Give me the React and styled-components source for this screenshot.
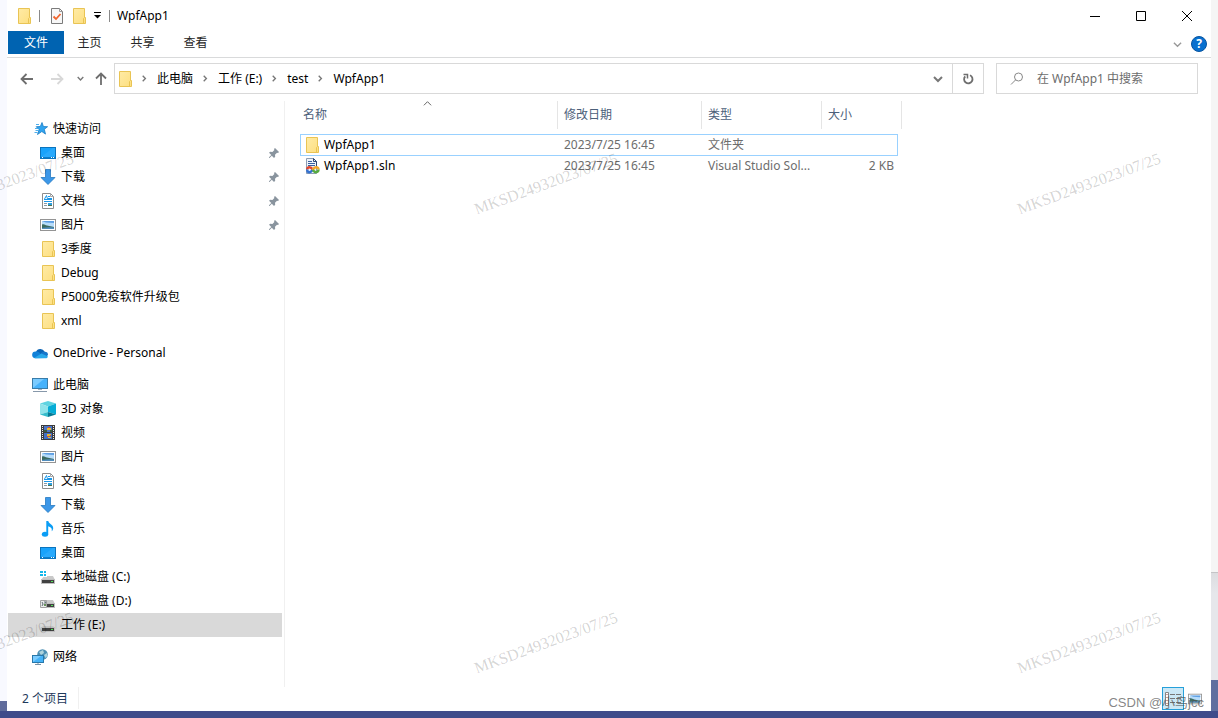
import { useState } from "react";
import styled, { createGlobalStyle } from "styled-components";

const GlobalStyle = createGlobalStyle`
  * { box-sizing: border-box; }
  body {
    margin: 0;
    background: #3f4b8a;
    font-family: "Noto Sans", "Noto Sans CJK SC", sans-serif;
    font-size: 12px;
    line-height: 16px;
    color: #000;
  }
  button, input {
    font: inherit;
    color: inherit;
    border: 0;
    padding: 0;
    background: transparent;
  }
  svg { display: block; flex: none; }
`;

const Desktop = styled.div`
  position: relative;
  display: grid;
  grid-template-columns: 7px 1fr 7px;
  grid-template-rows: 1fr 7px;
  min-height: 100vh;
  overflow: hidden;
`;

const LeftEdge = styled.div`
  background: #f8f9ff;
  border-bottom: 10px solid #5f6b9b;
`;

const RightEdge = styled.div`
  display: flex;
  flex-direction: column;
`;

const EdgeTop = styled.div`
  flex: 573;
  background: #f5f5f5;
  border-bottom: 1px solid #c4c4c6;
`;

const EdgeMiddle = styled.div`
  flex: 107;
  background: linear-gradient(#dcdde0, #e6e7eb 20px);
`;

const EdgeBottom = styled.div`
  flex: 31;
  background: #5f6f9f;
`;

const Window = styled.div`
  display: flex;
  flex-direction: column;
  background: #fff;
  min-width: 0;
`;

const TitleBar = styled.header`
  display: flex;
  align-items: center;
  height: 31px;
  padding-left: 9px;
`;

const Divider = styled.span`
  width: 1px;
  height: 12px;
  margin: 0 ${(p) => p.$right || 0}px 0 ${(p) => p.$left || 0}px;
  background: #8a8a8a;
`;

const QuickButton = styled.button`
  display: flex;
  align-items: center;
  justify-content: center;
  width: ${(p) => p.$width || 22}px;
  height: 22px;
`;

const Title = styled.h1`
  flex: 1;
  margin: 0;
  font-size: 12px;
  font-weight: normal;
`;

const WindowButtons = styled.div`
  display: flex;
  padding-right: 1px;
`;

const WindowButton = styled.button`
  display: flex;
  align-items: center;
  justify-content: center;
  width: 46px;
  height: 31px;
`;

const Ribbon = styled.nav`
  display: flex;
  height: 27px;
  padding-left: 1px;
  border-bottom: 1px solid #d9dadb;
`;

const Tab = styled.button`
  width: 53px;
  height: 24px;
  padding-right: 2px;
  color: #262626;
`;

const FileTab = styled(Tab)`
  width: 56px;
  height: 23px;
  padding-right: 0;
  color: #fff;
  background: #0063b1;
`;

const RibbonTools = styled.div`
  display: flex;
  align-items: center;
  gap: 9px;
  height: 26px;
  margin-left: auto;
  padding-right: 4px;
`;

const ToolBar = styled.div`
  display: flex;
  align-items: center;
  height: 41px;
  padding: 0 13px 0 5px;
`;

const NavButton = styled.button`
  display: flex;
  align-items: center;
  justify-content: center;
  width: ${(p) => p.$width || 30}px;
  height: 30px;
`;

const AddressBox = styled.div`
  display: flex;
  flex: 1;
  align-items: center;
  height: 31px;
  min-width: 0;
  padding-left: 3px;
  border: 1px solid #d9d9d9;
`;

const Crumbs = styled.ol`
  display: flex;
  flex: 1;
  margin: 0;
  padding: 0;
  list-style: none;
`;

const Crumb = styled.li`
  display: flex;
  align-items: center;
  white-space: nowrap;
`;

const CrumbArrow = styled.span`
  display: flex;
  justify-content: center;
  width: 25px;
`;

const Refresh = styled(NavButton)`
  width: 31px;
  height: 31px;
  border: 1px solid #d9d9d9;
  border-left: 0;
`;

const SearchBox = styled.label`
  display: flex;
  align-items: center;
  gap: 13px;
  width: 202px;
  height: 31px;
  margin-left: 12px;
  padding-left: 13px;
  border: 1px solid #d9d9d9;
`;

const SearchInput = styled.input`
  flex: 1;
  min-width: 0;
  outline: 0;
  &::placeholder {
    color: #6d6d6d;
    opacity: 1;
  }
`;

const Body = styled.div`
  display: flex;
  flex: 1;
  padding-top: 2px;
`;

const Sidebar = styled.nav`
  width: 278px;
  padding: 16px 2px 0 1px;
  border-right: 1px solid #f0f0f0;
`;

const Group = styled.ul`
  margin: 0 0 8px;
  padding: 0;
  list-style: none;
`;

const TreeItem = styled.button`
  display: flex;
  align-items: center;
  gap: 5px;
  width: 100%;
  height: 24px;
  padding: 0 2px 0 ${(p) => (p.$root ? 24 : 32)}px;
  text-align: left;
  background: ${(p) => (p.$active ? "#d9d9d9" : "transparent")};
`;

const TreeLabel = styled.span`
  flex: 1;
  white-space: nowrap;
`;

const Main = styled.main`
  flex: 1;
  min-width: 0;
  padding-left: 15px;
`;

const Files = styled.table`
  display: block;
  width: 602px;
  & thead, & tbody { display: block; }
`;

const HeadRow = styled.tr`
  display: grid;
  grid-template-columns: 258px 144px 120px 80px;
  height: 28px;
  margin-bottom: 5px;
`;

const HeadCell = styled.th`
  position: relative;
  padding: ${(p) => (p.$first ? "6px 0 0 3px" : "6px 0 0 6px")};
  border-right: 1px solid #e5e5e5;
  color: #4c607a;
  font-weight: normal;
  text-align: left;
`;

const SortMark = styled.span`
  position: absolute;
  top: -2px;
  left: 123px;
`;

const FileRow = styled.tr`
  display: grid;
  grid-template-columns: 258px 144px 120px 76px;
  width: 598px;
  height: 21px;
  ${(p) => p.$selected && "box-shadow: inset 0 1px #99d1ff, inset 1px 0 #99d1ff, inset -1px 0 #99d1ff, 0 1px #99d1ff;"}
`;

const Cell = styled.td`
  display: flex;
  align-items: center;
  justify-content: ${(p) => (p.$right ? "flex-end" : "flex-start")};
  gap: 4px;
  padding: 0 4px 0 ${(p) => (p.$name ? 4 : 6)}px;
  color: ${(p) => (p.$name ? "#000" : "#6d6d6d")};
  white-space: nowrap;
`;

const StatusBar = styled.footer`
  display: flex;
  align-items: flex-start;
  height: 24px;
  padding: 0 5px 0 15px;
`;

const Count = styled.span`
  padding: 4px 10px 2px 0;
  color: #1e395b;
  border-right: 1px solid #f0f0f0;
`;

const Views = styled.div`
  display: flex;
  margin-left: auto;
`;

const ViewButton = styled.button`
  display: flex;
  align-items: center;
  justify-content: center;
  width: 22px;
  height: 23px;
  border: 1px solid ${(p) => (p.$on ? "#26a0da" : "transparent")};
  background: ${(p) => (p.$on ? "#cbe8f6" : "transparent")};
`;

const BottomEdge = styled.div`
  grid-column: 1 / -1;
  background: #3f4b8a;
`;

const Watermark = styled.span`
  position: absolute;
  left: ${(p) => p.$x}px;
  top: ${(p) => p.$y}px;
  width: 160px;
  margin: -10px 0 0 -80px;
  font-family: "Liberation Serif", serif;
  font-size: 16px;
  line-height: 20px;
  text-align: center;
  color: rgba(0, 0, 0, 0.18);
  transform: rotate(-20deg);
  pointer-events: none;
`;

const Credit = styled.span`
  position: absolute;
  right: 14px;
  bottom: 6px;
  font-family: "Liberation Sans", "Noto Sans CJK SC", sans-serif;
  font-size: 13px;
  line-height: 18px;
  color: rgba(80, 80, 80, 0.7);
  pointer-events: none;
`;

const FolderIcon = ({ width = 16 }) => (
  <svg width={width} height="16" viewBox={width === 16 ? "0 0 16 16" : "1 0 14 16"}>
    <defs>
      <linearGradient id="folder" x1="0" y1="0" x2="1" y2="1">
        <stop offset="0" stopColor="#ffeba6" />
        <stop offset="1" stopColor="#fddf80" />
      </linearGradient>
    </defs>
    <path d="M2.500.5h11v9h1v6h-12z" fill="url(#folder)" stroke="#e9c454" />
    <path d="M12.500 15V10.500l1-1" fill="none" stroke="#e9c454" />
  </svg>
);

const CheckDocIcon = () => (
  <svg width="16" height="16" viewBox="0 0 16 16">
    <path d="M2.500.5h8l3 3v12h-11z" fill="#f7f7f7" stroke="#7b7b7b" />
    <path d="M10.500.5v3h3" fill="none" stroke="#9a9a9a" />
    <path d="M4.500 8.500l2.500 2.500 4.500-5" fill="none" stroke="#f0642d" strokeWidth="1.800" />
  </svg>
);

const StarIcon = () => (
  <svg width="16" height="16" viewBox="0 0 16 16">
    <path d="M10 1.500l1.400 4 4.200.2-3.300 2.600 1.200 4.800-3.700-2.600-4.300 3 1.600-4.900L4.200 5.700l4.100-.2z" fill="#2fa4f0" stroke="#1b7cc4" strokeWidth=".8" />
    <path d="M4 3.500h3M3 7.500h3.500M3.500 9.500h3M2.500 11.500h3" stroke="#3aa5ea" strokeWidth=".9" />
  </svg>
);

const DesktopIcon = () => (
  <svg width="16" height="16" viewBox="0 0 16 16">
    <rect x=".5" y="2.500" width="15" height="11" fill="#18a2fb" stroke="#0b74bd" />
    <path d="M1 12L13 3h2v8l-4 1H1z" fill="#38b0fd" opacity=".5" />
    <path d="M1 12.500h14" stroke="#0a7ccb" />
    <path d="M2 12.500h1M11 12.500h1M13 12.500h1" stroke="#fff" />
  </svg>
);

const DownloadIcon = () => (
  <svg width="16" height="16" viewBox="0 0 16 16">
    <path d="M5.500.5h5v8h4.500l-7 7-7-7h4.500z" fill="#3b97e8" stroke="#2678c0" strokeWidth=".8" />
  </svg>
);

const DocumentIcon = () => (
  <svg width="16" height="16" viewBox="0 0 16 16">
    <path d="M2.500.5h8l3 3v12h-11z" fill="#fff" stroke="#8c8c8c" />
    <path d="M10.500.5v3h3" fill="none" stroke="#a8a8a8" />
    <path d="M4.500 6l2-3.500 1 3.500M8 3.500h2M8 5.500h4M4 6.500h8M4 8.500h8" fill="none" stroke="#1b97e8" />
    <path d="M4 10.500h3M4 12.500h3" stroke="#8b9aa5" />
    <rect x="8" y="10" width="4" height="3" fill="#2f9fdc" />
    <path d="M8 12.500h4" stroke="#4c704f" />
  </svg>
);

const PictureIcon = ({ size = 16 }) => (
  <svg width={size} height={size} viewBox="0 0 16 16">
    <rect x=".5" y="2.500" width="15" height="11" fill="#fff" stroke="#949494" />
    <rect x="2" y="4" width="12" height="8" fill="#b7dcfa" />
    <path d="M2 4h12v2L6 5.500z" fill="#5e9fe3" />
    <path d="M2 7.500c2-1 3 .5 5 1l7 1.500v2H2z" fill="#3c6b60" />
    <path d="M2 11c4-1 8-1 12-.5V12H2z" fill="#518dbd" />
  </svg>
);

const CloudIcon = () => (
  <svg width="16" height="16" viewBox="0 0 16 16">
    <path d="M4 7a4.600 4.600 0 0 1 8.500-.5L14 9 7 11z" fill="#0b64b5" />
    <path d="M3.500 13.300A3.400 3.400 0 0 1 3.600 6.500c1.700-.2 3 .5 4 1.200l5 5.300z" fill="#1181d8" />
    <path d="M9 8.500c.8-1.300 2-2 3.500-1.800A3.300 3.300 0 0 1 16 10l-2 2z" fill="#1676ca" />
    <path d="M2 13l7.500-4.500L16 11.500c-.3 1.200-1.200 1.800-2.300 1.800H3.500z" fill="#28a8ea" />
  </svg>
);

const ComputerIcon = () => (
  <svg width="16" height="16" viewBox="0 0 16 16">
    <rect x=".5" y="1.500" width="15" height="10" fill="#46b2fb" stroke="#397ca9" />
    <path d="M1 11V2h11z" fill="#7acbff" />
    <path d="M6 12.500h4" stroke="#a0b2c1" />
    <path d="M1 14.500h14" stroke="#8798aa" />
  </svg>
);

const CubeIcon = () => (
  <svg width="16" height="16" viewBox="0 0 16 16">
    <path d="M0 2.500L8 0l8 2.500L8 5.500z" fill="#5fd3e0" />
    <path d="M0 2.500l8 3V11l-8 2.500z" fill="#8fe3ea" />
    <path d="M8 5.500l8-3v11L8 11z" fill="#06acd6" />
    <path d="M0 13.500L8 11v5z" fill="#35bccb" />
    <path d="M8 11l8 2.500L8 16z" fill="#067a95" />
  </svg>
);

const VideoIcon = () => (
  <svg width="16" height="16" viewBox="0 0 16 16">
    <rect x="1" y="0" width="14" height="15" fill="#3c3c3c" />
    <path d="M2.500 1v14M13.500 1v14" stroke="#ededed" strokeDasharray="1 1" />
    <rect x="4" y="1" width="8" height="6" fill="#4c75c8" />
    <rect x="4" y="8" width="8" height="6" fill="#416fc4" />
    <path d="M7 3h4v2H7zM7 9h4v2H7zM8 12h3v1H8z" fill="#e5b92f" />
    <path d="M8 2h2v1H8zM7 11h2v1H7zM10 10h1v1h-1z" fill="#d94932" />
    <path d="M4 5h3v2H4zM10 5h2v2h-2z" fill="#385b40" />
  </svg>
);

const MusicIcon = () => (
  <svg width="16" height="16" viewBox="0 0 16 16">
    <ellipse cx="5" cy="13.200" rx="3.200" ry="2.500" fill="#0a9df5" />
    <path d="M6.300 13V0h2c.3 2.600 4.900 3.500 4.900 7 0 1.400-.6 2.500-1.500 3.300.6-3-.8-4-3.500-5v8z" fill="#0a9df5" />
  </svg>
);

const DriveIcon = ({ kind }) => (
  <svg width="16" height="16" viewBox="0 0 16 16">
    {kind !== "plain" && <path d="M4 7h9l2 4H1z" fill="#c9c9c9" />}
    {kind === "plain" && <path d="M3 9h10l2 2H1z" fill="#c4c4c4" />}
    <rect x="1" y="10" width="14" height="5" fill="#bfbfbf" />
    <rect x="2" y="11" width="12" height="3" fill="#414141" />
    <rect x="11" y="12" width="2" height="1" fill="#53e35a" />
    {kind === "system" && (
      <>
        <path d="M0 2h7v6H0z" fill="#fff" />
        <path d="M0 2h3v2H0zM4 2h2v2H4zM0 5h3v2H0zM4 5h2v2H4z" fill="#13b7ea" />
      </>
    )}
    {kind === "disk" && (
      <>
        <path d="M.5 7.500h6v7h-6z" fill="#ececec" stroke="#a2a2a2" />
        <path d="M2 9l1 2-1 2M4 9h2l-2 3" fill="none" stroke="#5f6e74" />
        <path d="M4 11h2v2H4z" fill="#68935c" />
      </>
    )}
  </svg>
);

const NetworkIcon = () => (
  <svg width="16" height="16" viewBox="0 0 16 16">
    <circle cx="10.500" cy="5.500" r="5.300" fill="#4d90b4" />
    <path d="M7 3l4-2 1 3-3 2zM12 6l3-2 .5 3-2 2z" fill="#aed3dc" />
    <rect x=".5" y="6.500" width="11" height="7" fill="#45b2f7" stroke="#2878aa" />
    <path d="M1 13V7h8z" fill="#7bccff" />
    <path d="M6 14v1.500M3 15.500h6" stroke="#7692a7" />
  </svg>
);

const SolutionIcon = () => (
  <svg width="16" height="16" viewBox="0 0 16 16">
    <path d="M2.500.5h7l3 3v12h-10z" fill="#eef3fa" stroke="#8d9db3" />
    <path d="M9.500.5l3 3v6M9.500.5v3h3" fill="none" stroke="#2f4a74" />
    <path d="M4 3.500h4M4 5.500h7M4 7.500h7" stroke="#3a62a0" />
    <path d="M9 11.800c-1.300-1.800-2.300-2.600-3.500-2.600-1.400 0-2.300.9-2.300 2.300" fill="none" stroke="#e2472d" strokeWidth="2.400" />
    <path d="M3.200 11.500c0 1.800 1 2.700 2.300 2.700 1.200 0 2.200-1 3.200-2.200" fill="none" stroke="#3572d0" strokeWidth="2.400" />
    <path d="M8.500 12c1-1.600 2.200-2.800 3.500-2.800 1.400 0 2.500.9 2.500 2.400" fill="none" stroke="#f4a82a" strokeWidth="2.400" />
    <path d="M14.500 11.600c0 1.700-1.100 2.600-2.500 2.600-1.200 0-2.200-.8-3.200-2.200" fill="none" stroke="#58ab40" strokeWidth="2.400" />
  </svg>
);

const PinIcon = () => (
  <svg width="12" height="12" viewBox="0 0 12 12">
    <path d="M7 1l4 4-1 1-1-.3-2 2 .2 2L6 11 3.800 8.700 1.500 11H1v-.8L3.300 8 1 5.800l1.200-1 2.200.1 2-2L6 2z" fill="#89949e" />
  </svg>
);

const Chevron = ({ direction = "down", width = 9, color = "#777", stroke = 1.5 }) => {
  const paths = {
    down: "M1 3l4 4 4-4",
    up: "M1 7l4-4 4 4",
    right: "M3 2l3 3-3 3",
  };
  return (
    <svg width={width} height={width} viewBox="0 0 10 10">
      <path d={paths[direction]} fill="none" stroke={color} strokeWidth={stroke} />
    </svg>
  );
};

const ArrowIcon = ({ color = "#6e6e6e", rotate = 0 }) => (
  <svg width="14" height="14" viewBox="0 0 14 14">
    <path d="M13 7H1.500M6.500 2l-5 5 5 5" fill="none" stroke={color} strokeWidth="1.800" transform={`rotate(${rotate} 7 7)`} />
  </svg>
);

const RefreshIcon = () => (
  <svg width="12" height="12" viewBox="0 0 12 12">
    <path d="M3.200 3.300A4.200 4.200 0 1 0 8 2.300" fill="none" stroke="#6e6e6e" strokeWidth="1.800" />
    <path d="M1.500 1.500h4v4" fill="none" stroke="#6e6e6e" strokeWidth="1.500" />
  </svg>
);

const SearchIcon = () => (
  <svg width="14" height="14" viewBox="0 0 14 14">
    <circle cx="8.500" cy="5" r="4" fill="none" stroke="#888" />
    <path d="M5.700 7.800L1 12.500" stroke="#888" />
  </svg>
);

const DetailsIcon = () => (
  <svg width="16" height="16" viewBox="0 0 16 16">
    <path d="M.5 1.500h3v13h-3z" fill="#fff" stroke="#858585" />
    <path d="M2 3v1M2 6v1M2 9v1M2 12v1" stroke="#954343" />
    <path d="M5 3.500h5M11 3.500h5M5 7.500h5M11 7.500h5M5 11.500h5M11 11.500h5" stroke="#777" />
  </svg>
);

const HelpIcon = styled.span`
  display: block;
  width: 16px;
  height: 16px;
  border: 1px solid #0754a0;
  border-radius: 50%;
  background: #0870cf;
  color: #fff;
  font-weight: bold;
  line-height: 14px;
`;

const groups = [
  [
    { id: "quick", label: "快速访问", icon: <StarIcon />, root: true },
    { id: "q-desktop", label: "桌面", icon: <DesktopIcon />, pinned: true },
    { id: "q-download", label: "下载", icon: <DownloadIcon />, pinned: true },
    { id: "q-docs", label: "文档", icon: <DocumentIcon />, pinned: true },
    { id: "q-pics", label: "图片", icon: <PictureIcon />, pinned: true },
    { id: "q3", label: "3季度", icon: <FolderIcon /> },
    { id: "debug", label: "Debug", icon: <FolderIcon /> },
    { id: "p5000", label: "P5000免疫软件升级包", icon: <FolderIcon /> },
    { id: "xml", label: "xml", icon: <FolderIcon /> },
  ],
  [{ id: "onedrive", label: "OneDrive - Personal", icon: <CloudIcon />, root: true }],
  [
    { id: "pc", label: "此电脑", icon: <ComputerIcon />, root: true },
    { id: "3d", label: "3D 对象", icon: <CubeIcon /> },
    { id: "video", label: "视频", icon: <VideoIcon /> },
    { id: "pics", label: "图片", icon: <PictureIcon /> },
    { id: "docs", label: "文档", icon: <DocumentIcon /> },
    { id: "download", label: "下载", icon: <DownloadIcon /> },
    { id: "music", label: "音乐", icon: <MusicIcon /> },
    { id: "desktop", label: "桌面", icon: <DesktopIcon /> },
    { id: "c", label: "本地磁盘 (C:)", icon: <DriveIcon kind="system" /> },
    { id: "d", label: "本地磁盘 (D:)", icon: <DriveIcon kind="disk" /> },
    { id: "e", label: "工作 (E:)", icon: <DriveIcon kind="plain" /> },
  ],
  [{ id: "network", label: "网络", icon: <NetworkIcon />, root: true }],
];

const files = [
  { name: "WpfApp1", date: "2023/7/25 16:45", type: "文件夹", size: "", icon: <FolderIcon /> },
  { name: "WpfApp1.sln", date: "2023/7/25 16:45", type: "Visual Studio Sol...", size: "2 KB", icon: <SolutionIcon /> },
];

const crumbs = ["此电脑", "工作 (E:)", "test", "WpfApp1"];

const watermarks = [
  [2, 184], [546, 184], [1089, 184],
  [2, 643], [546, 643], [1089, 643],
];

const WindowHeader = () => (
  <>
    <TitleBar>
      <FolderIcon />
      <Divider $left={7} $right={6} />
      <QuickButton aria-label="属性"><CheckDocIcon /></QuickButton>
      <QuickButton aria-label="新建文件夹"><FolderIcon /></QuickButton>
      <QuickButton $width={14} aria-label="自定义快速访问工具栏">
        <svg width="7" height="7" viewBox="0 0 7 7">
          <path d="M0 .5h7" stroke="#000" />
          <path d="M0 3h7L3.500 6.500z" />
        </svg>
      </QuickButton>
      <Divider $left={5} $right={7} />
      <Title>WpfApp1</Title>
      <WindowButtons>
        <WindowButton aria-label="最小化">
          <svg width="10" height="10"><path d="M0 5.500h10" stroke="#000" /></svg>
        </WindowButton>
        <WindowButton aria-label="最大化">
          <svg width="10" height="10"><path d="M.5.5h9v9h-9z" fill="none" stroke="#000" /></svg>
        </WindowButton>
        <WindowButton aria-label="关闭">
          <svg width="10" height="10"><path d="M0 0l10 10M10 0L0 10" stroke="#000" /></svg>
        </WindowButton>
      </WindowButtons>
    </TitleBar>
    <Ribbon>
      <FileTab>文件</FileTab>
      <Tab>主页</Tab>
      <Tab>共享</Tab>
      <Tab>查看</Tab>
      <RibbonTools>
        <button aria-label="展开功能区"><Chevron color="#999" /></button>
        <button aria-label="帮助"><HelpIcon>?</HelpIcon></button>
      </RibbonTools>
    </Ribbon>
  </>
);

const AddressBar = () => (
  <ToolBar>
    <NavButton aria-label="后退"><ArrowIcon /></NavButton>
    <NavButton aria-label="前进"><ArrowIcon color="#d8d8d8" rotate={180} /></NavButton>
    <NavButton $width={16} aria-label="最近浏览的位置"><Chevron width={7} stroke={2} /></NavButton>
    <NavButton $width={26} aria-label="上移"><ArrowIcon rotate={90} /></NavButton>
    <AddressBox>
      <FolderIcon width={14} />
      <Crumbs>
        {crumbs.map((crumb) => (
          <Crumb key={crumb}>
            <CrumbArrow><Chevron direction="right" /></CrumbArrow>
            <button>{crumb}</button>
          </Crumb>
        ))}
      </Crumbs>
      <NavButton $width={28} aria-label="以前的位置"><Chevron width={10} stroke={2} /></NavButton>
    </AddressBox>
    <Refresh aria-label="刷新"><RefreshIcon /></Refresh>
    <SearchBox>
      <SearchIcon />
      <SearchInput aria-label="搜索" placeholder="在 WpfApp1 中搜索" />
    </SearchBox>
  </ToolBar>
);

const NavigationPane = () => {
  const [active, setActive] = useState("e");
  return (
    <Sidebar>
      {groups.map((items) => (
        <Group key={items[0].id}>
          {items.map((item) => (
            <li key={item.id}>
              <TreeItem $root={item.root} $active={item.id === active} onClick={() => setActive(item.id)}>
                {item.icon}
                <TreeLabel>{item.label}</TreeLabel>
                {item.pinned && <PinIcon />}
              </TreeItem>
            </li>
          ))}
        </Group>
      ))}
    </Sidebar>
  );
};

const FileList = () => {
  const [selected, setSelected] = useState("WpfApp1");
  return (
    <Main>
      <Files>
        <thead>
          <HeadRow>
            <HeadCell $first>
              <SortMark><Chevron direction="up" color="#555" stroke={1} /></SortMark>
              名称
            </HeadCell>
            <HeadCell>修改日期</HeadCell>
            <HeadCell>类型</HeadCell>
            <HeadCell>大小</HeadCell>
          </HeadRow>
        </thead>
        <tbody>
          {files.map((file) => (
            <FileRow key={file.name} $selected={file.name === selected} onClick={() => setSelected(file.name)}>
              <Cell $name>{file.icon}{file.name}</Cell>
              <Cell>{file.date}</Cell>
              <Cell>{file.type}</Cell>
              <Cell $right>{file.size}</Cell>
            </FileRow>
          ))}
        </tbody>
      </Files>
    </Main>
  );
};

const App = () => {
  const [view, setView] = useState("details");
  return (
    <Desktop>
      <GlobalStyle />
      <LeftEdge />
      <Window>
        <WindowHeader />
        <AddressBar />
        <Body>
          <NavigationPane />
          <FileList />
        </Body>
        <StatusBar>
          <Count>2 个项目</Count>
          <Views>
            <ViewButton $on={view === "details"} aria-label="详细信息" onClick={() => setView("details")}>
              <DetailsIcon />
            </ViewButton>
            <ViewButton $on={view === "large"} aria-label="大图标" onClick={() => setView("large")}>
              <PictureIcon size={14} />
            </ViewButton>
          </Views>
        </StatusBar>
      </Window>
      <RightEdge>
        <EdgeTop />
        <EdgeMiddle />
        <EdgeBottom />
      </RightEdge>
      <BottomEdge />
      {watermarks.map(([x, y]) => (
        <Watermark key={`${x}-${y}`} $x={x} $y={y}>MKSD24932023/07/25</Watermark>
      ))}
      <Credit>CSDN @小鸟jcc</Credit>
    </Desktop>
  );
};

export default App;
